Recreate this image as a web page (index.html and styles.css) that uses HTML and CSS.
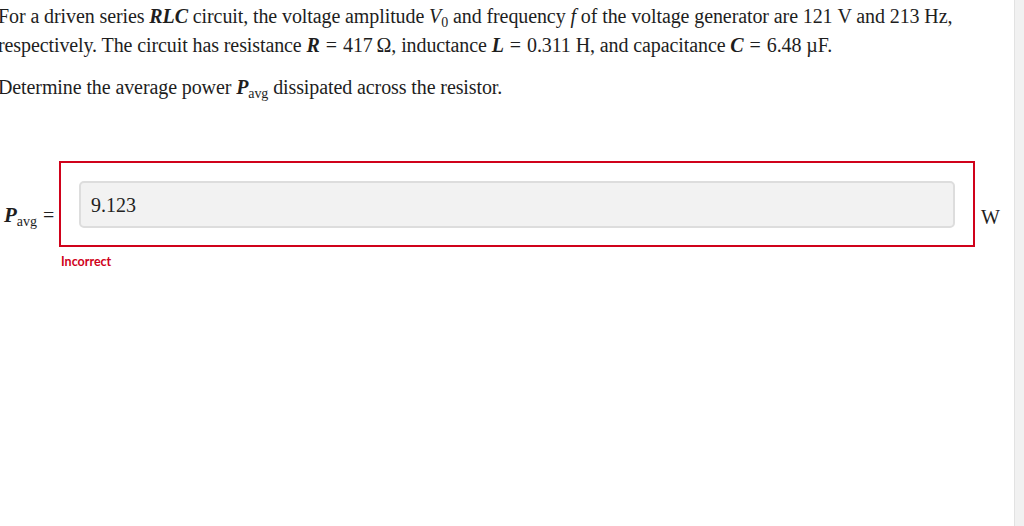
FILE: index.html
```html
<!DOCTYPE html>
<html>
<head>
<meta charset="utf-8">
<link rel="stylesheet" href="styles.css">
</head>
<body>
<div class="page">
  <main class="content">
    <p class="q">For a driven series <b class="m">RLC</b> circuit, the voltage amplitude <i>V</i><sub>0</sub> and frequency <i>f</i> of the voltage generator are 121&nbsp;V and 213&nbsp;Hz, respectively. The circuit has resistance <b class="m">R</b><span class="op">=</span>417&#8201;&Omega;, inductance <b class="m">L</b><span class="op">=</span>0.311&nbsp;H, and capacitance <b class="m">C</b><span class="op">=</span>6.48&nbsp;&micro;F.</p>
    <p class="q">Determine the average power <b class="m">P</b><sub>avg</sub> dissipated across the resistor.</p>
    <div class="answer">
      <div class="label"><span class="lm"><b class="m big">P</b><sub>avg</sub><span class="eq">=</span></span></div>
      <div class="field">
        <div class="box"><div class="input">9.123</div></div>
        <div class="err">Incorrect</div>
      </div>
      <div class="unit">W</div>
    </div>
  </main>
  <aside class="scroll"></aside>
</div>
</body>
</html>
```
FILE: styles.css
```css
html, body { margin: 0; padding: 0; background: #fff; }
.page { display: flex; min-height: 100vh; }
.content {
  flex: 1;
  margin-left: -2px;
  padding-top: 2px;
  font-family: "Liberation Serif", "Times New Roman", serif;
  font-size: 20px;
  color: #1e1e1e;
}
.q { margin: 0 0 13px 0; line-height: 29px; letter-spacing: -0.1px; }
.m { font-style: italic; font-weight: bold; }
.op { margin: 0 6px; }
sub { font-size: 14px; vertical-align: -4px; line-height: 0; }
.answer {
  display: flex;
  align-items: flex-start;
  margin-top: 59px;
  padding-left: 6px;
}
.label { width: 55px; flex: none; height: 86px; display: flex; align-items: center; padding-top: 22px; box-sizing: border-box; }
.big { font-size: 21px; }
.eq { margin-left: 6px; }
.field { width: 916px; flex: none; }
.box {
  border: 2px solid #d0021b;
  padding: 18px 18px 17px 18px;
  height: 86px;
  box-sizing: border-box;
}
.input {
  background: #f2f2f2;
  border: 2px solid #dddddd;
  border-radius: 5px;
  height: 47px;
  box-sizing: border-box;
  padding: 9px 10px;
  font-size: 20px;
  line-height: 26px;
  color: #222;
}
.err {
  font-family: Lato, "Liberation Sans", sans-serif;
  font-size: 12.5px;
  font-weight: bold;
  color: #d0021b;
  margin-top: 7px;
  padding-left: 2px;
}
.unit { height: 86px; display: flex; align-items: center; padding-left: 6px; padding-top: 26px; box-sizing: border-box; }
.scroll { width: 9px; flex: none; background: #f1f1f1; border-left: 1px solid #e2e2e2; }
```
